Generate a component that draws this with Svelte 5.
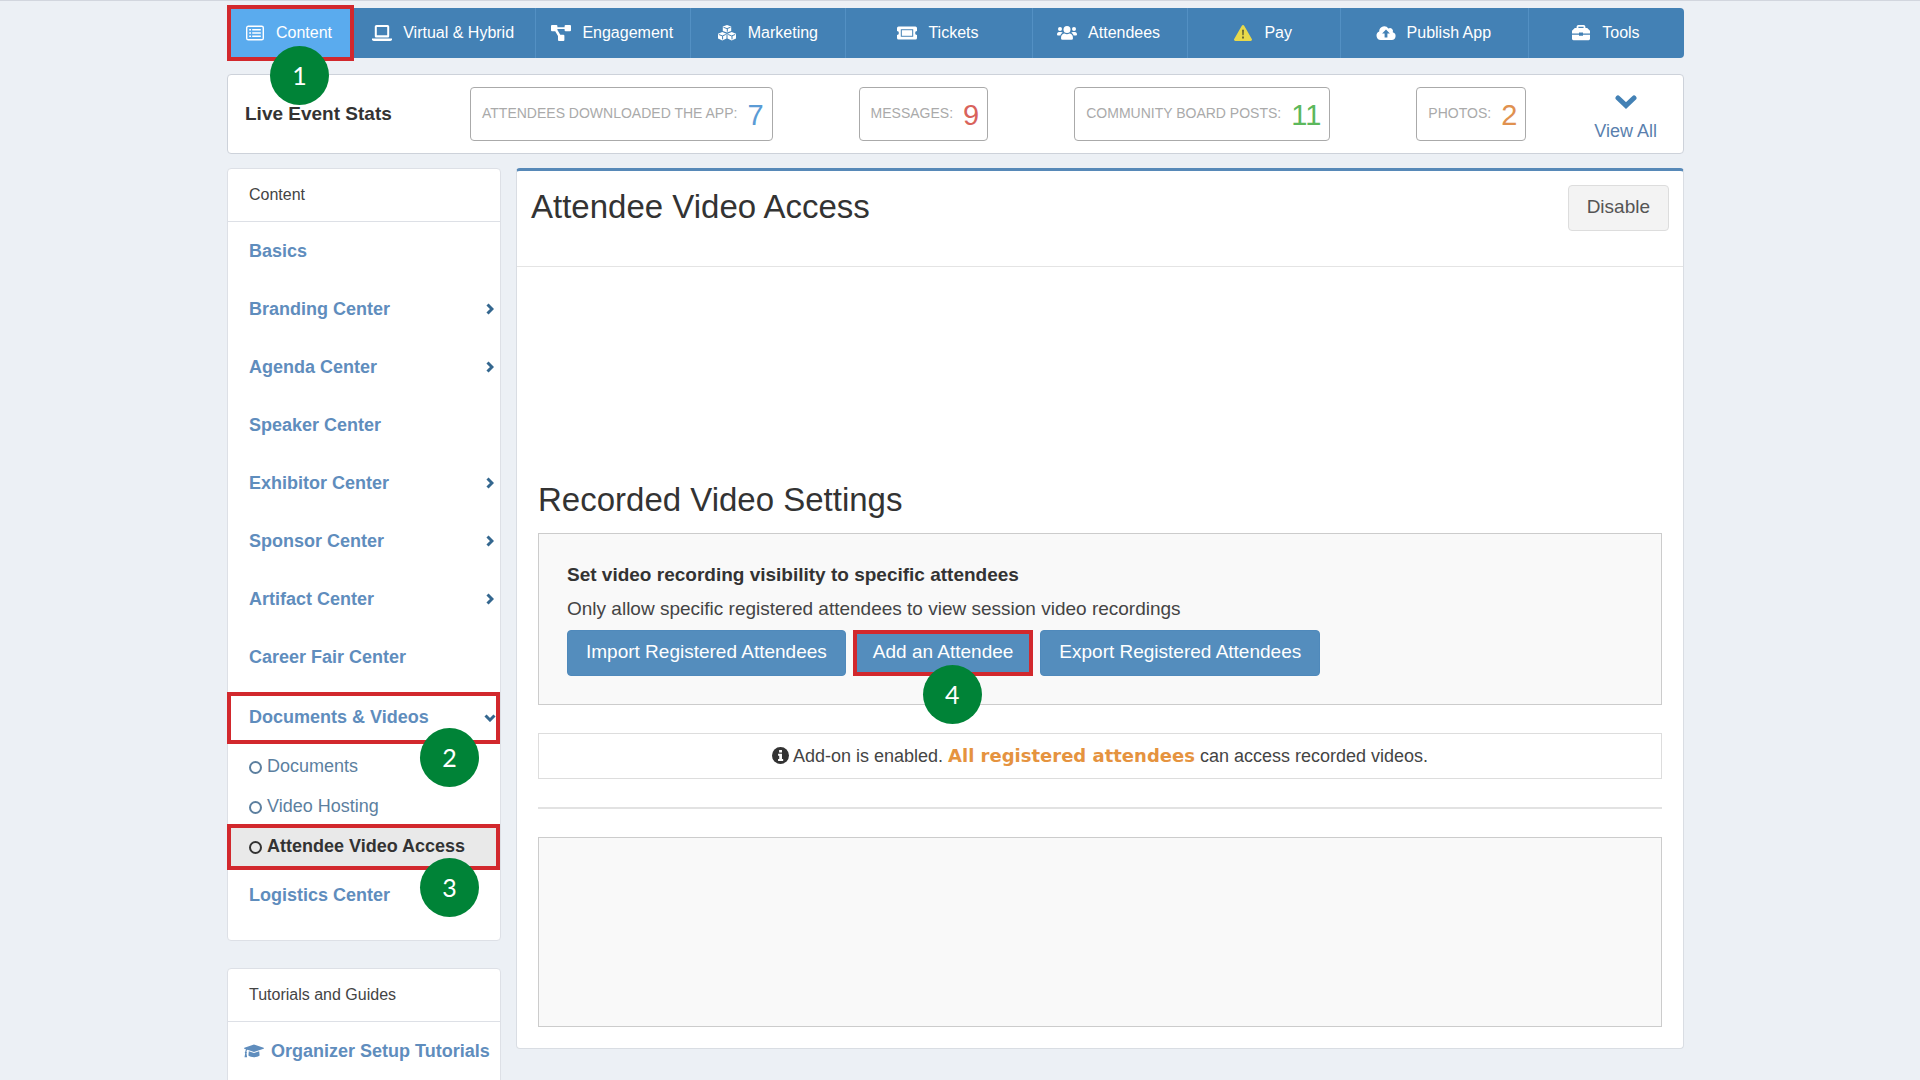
<script lang="ts">
  type NavItem = { label: string; icon: string; width: number; active?: boolean; step?: number };
  type MenuItem = { label: string; arrow?: "right" | "down"; step?: number; children?: SubItem[] };
  type SubItem = { label: string; selected?: boolean; step?: number };

  const nav: NavItem[] = [
    { label: "Content", icon: "list", width: 126, active: true, step: 1 },
    { label: "Virtual & Hybrid", icon: "laptop", width: 183 },
    { label: "Engagement", icon: "diagram", width: 155 },
    { label: "Marketing", icon: "cubes", width: 155 },
    { label: "Tickets", icon: "ticket", width: 186 },
    { label: "Attendees", icon: "users", width: 155 },
    { label: "Pay", icon: "warning", width: 153 },
    { label: "Publish App", icon: "cloud", width: 188 },
    { label: "Tools", icon: "toolbox", width: 155 },
  ];

  const stats = [
    { label: "Attendees downloaded the app:", value: 7, tone: "blue" },
    { label: "Messages:", value: 9, tone: "red" },
    { label: "Community board posts:", value: 11, tone: "green" },
    { label: "Photos:", value: 2, tone: "orange" },
  ];

  const menu: MenuItem[] = [
    { label: "Basics" },
    { label: "Branding Center", arrow: "right" },
    { label: "Agenda Center", arrow: "right" },
    { label: "Speaker Center" },
    { label: "Exhibitor Center", arrow: "right" },
    { label: "Sponsor Center", arrow: "right" },
    { label: "Artifact Center", arrow: "right" },
    { label: "Career Fair Center" },
    {
      label: "Documents & Videos",
      arrow: "down",
      step: 2,
      children: [
        { label: "Documents" },
        { label: "Video Hosting" },
        { label: "Attendee Video Access", selected: true, step: 3 },
      ],
    },
    { label: "Logistics Center" },
  ];

  const navColumns = nav.map((item) => `${item.width}fr`).join(" ");
</script>

{#snippet icon(name: string)}
  <svg class="icon {name}" viewBox="0 0 20 16" aria-hidden="true">
    {#if name === "list"}
      <rect x="1.7" y="1.2" width="16.6" height="13.6" rx="1.6" fill="none" stroke="currentColor" stroke-width="1.4" />
      <path d="M4.2 4h1.8v1.6H4.2zM7.2 4h8.6v1.6H7.2zM4.2 7.2h1.8v1.6H4.2zM7.2 7.2h8.6v1.6H7.2zM4.2 10.4h1.8V12H4.2zM7.2 10.4h8.6V12H7.2z" />
    {:else if name === "laptop"}
      <path fill-rule="evenodd" d="M4.4 0h11.2a1.6 1.6 0 0 1 1.6 1.6v9.6a1.2 1.2 0 0 1-1.2 1.2H4a1.2 1.2 0 0 1-1.2-1.2V1.6A1.6 1.6 0 0 1 4.4 0zM4.8 2v8.2h10.4V2z" />
      <path d="M0 13.4h20v.8A1.8 1.8 0 0 1 18.2 16H1.8A1.8 1.8 0 0 1 0 14.2z" />
    {:else if name === "diagram"}
      <path d="M1 0h4.4a1 1 0 0 1 1 1v1.2h7.2V1a1 1 0 0 1 1-1H19a1 1 0 0 1 1 1v4.2a1 1 0 0 1-1 1h-4.4a1 1 0 0 1-1-1V4H6.4v.9L9.3 9.8h3.1a1 1 0 0 1 1 1V15a1 1 0 0 1-1 1H8a1 1 0 0 1-1-1v-3.9L4.2 6.2H1a1 1 0 0 1-1-1V1a1 1 0 0 1 1-1z" />
    {:else if name === "cubes"}
      <path d="M10 0l4.2 1.5v4.4L10 7.6 5.8 5.9V1.5zM5.3 7.1l4.2 1.6v4.7L5.3 15.5 1 13.4V8.7zM14.7 7.1L19 8.7v4.7l-4.3 2.1-4.2-2.1V8.7z" />
      <path class="cut" d="M6.5 2.3L10 3.6l3.5-1.3M10.3 3.7v3M1.8 9.5l3.5 1.4 3.5-1.4M5.6 11v3.4M11.2 9.5l3.5 1.4 3.5-1.4M15 11v3.4" />
    {:else if name === "ticket"}
      <path fill-rule="evenodd" d="M1.6 1.5h16.8A1.6 1.6 0 0 1 20 3.1v3a1.9 1.9 0 0 0 0 3.8v3a1.6 1.6 0 0 1-1.6 1.6H1.6A1.6 1.6 0 0 1 0 12.9v-3a1.9 1.9 0 0 0 0-3.8v-3a1.6 1.6 0 0 1 1.6-1.6zM3.8 4.2v7.6h12.4V4.2z" />
      <path d="M4.8 5.2h10.4v5.6H4.8z" />
    {:else if name === "users"}
      <circle cx="10" cy="4.4" r="3.5" />
      <circle cx="3" cy="4" r="2" />
      <circle cx="17" cy="4" r="2" />
      <path d="M4 13.2c0-3 1.6-4.6 3.6-4.6 1.6.9 3.2.9 4.8 0 2 0 3.6 1.6 3.6 4.6a1.5 1.5 0 0 1-1.5 1.5h-9A1.5 1.5 0 0 1 4 13.2zM0 9.5C0 8 .8 7 2 7h2c.8 0 1.3.2 1.7.7C4.4 8.5 3.7 9.3 3.4 10.4H1a1 1 0 0 1-1-.9zM20 9.5C20 8 19.2 7 18 7h-2c-.8 0-1.3.2-1.7.7 1.3.8 2 1.6 2.3 2.7H19a1 1 0 0 0 1-.9z" />
    {:else if name === "warning"}
      <path d="M8.8.7a1.4 1.4 0 0 1 2.4 0l7.6 13.2a1.4 1.4 0 0 1-1.2 2.1H2.4a1.4 1.4 0 0 1-1.2-2.1z" />
      <path class="mark" d="M9 4.8h2l-.3 5.4H9.3zM9 11.4h2v2H9z" />
    {:else if name === "cloud"}
      <path fill-rule="evenodd" d="M16.8 7.2A3 3 0 0 0 12.4 3.6 5 5 0 0 0 3.2 6.1v.3A4.5 4.5 0 0 0 4.6 15h11.2a4 4 0 0 0 1-7.8zM10 4.6l3.9 4h-2.5v3.8H8.6V8.6H6.1z" />
    {:else if name === "toolbox"}
      <path fill-rule="evenodd" d="M5.6 3V1.8A1.8 1.8 0 0 1 7.4 0h5.2a1.8 1.8 0 0 1 1.8 1.8V3h1.8L19 5.8v2.7h-7V7.6H8v.9H1V5.8L3.8 3zM7.4 1.8V3h5.2V1.8z" />
      <path d="M1 9.7h7v1.1h4V9.7h7v4.1a1.4 1.4 0 0 1-1.4 1.4H2.4A1.4 1.4 0 0 1 1 13.8z" />
    {:else if name === "graduation"}
      <path d="M10 1.5l9.6 3.2c.5.2.5.9 0 1.1L10 9 3.4 6.8c-.8.6-.9 1.3-.9 2 .5.4.5 1.1 0 1.5l.6 3.9H.5l.7-3.9c-.5-.4-.5-1.2.1-1.5 0-1 .2-1.800.8-2.400L.4 5.8c-.5-.2-.5-.9 0-1.1z" />
      <path d="M4.800 8.200L10 9.900l5.200-1.700.4 4.300c-2.600 2.300-8.600 2.300-11.200 0z" />
    {/if}
  </svg>
{/snippet}

{#snippet badge(step: number)}
  <span class="badge">{step}</span>
{/snippet}

<div class="page">
  <div class="container">
    <nav class="topnav" style="grid-template-columns: {navColumns}">
      {#each nav as item}
        <a href="#top" class="tab" class:active={item.active}>
          {@render icon(item.icon)}
          <span>{item.label}</span>
          {#if item.step}{@render badge(item.step)}{/if}
        </a>
      {/each}
    </nav>

    <section class="stats">
      <h2>Live Event Stats</h2>
      <div class="stat-list">
        {#each stats as stat}
          <div class="stat">
            <span class="stat-label">{stat.label}</span>
            <span class="stat-value {stat.tone}">{stat.value}</span>
          </div>
        {/each}
      </div>
      <a class="view-all" href="#stats">
        <svg viewBox="0 0 22 14" aria-hidden="true"><path d="M3 3l8 7.500L19 3" /></svg>
        <span>View All</span>
      </a>
    </section>

    <div class="columns">
      <aside>
        <section class="side-panel">
          <h3>Content</h3>
          <ul class="menu">
            {#each menu as item}
              <li>
                <a class="menu-link" class:marked={item.step} class:open={item.children} href="#menu">
                  <span>{item.label}</span>
                  {#if item.arrow}
                    <svg class="arrow {item.arrow}" viewBox="0 0 8 12" aria-hidden="true"><path d="M1.5 1.5L6 6l-4.5 4.5" /></svg>
                  {/if}
                  {#if item.step}{@render badge(item.step)}{/if}
                </a>
                {#if item.children}
                  <ul class="submenu">
                    {#each item.children as child}
                      <li>
                        <a class="sub-link" class:selected={child.selected} class:marked={child.step} href="#submenu">
                          <i class="dot"></i>
                          <span>{child.label}</span>
                          {#if child.step}{@render badge(child.step)}{/if}
                        </a>
                      </li>
                    {/each}
                  </ul>
                {/if}
              </li>
            {/each}
          </ul>
        </section>

        <section class="side-panel">
          <h3>Tutorials and Guides</h3>
          <a class="guide" href="#guides">
            {@render icon("graduation")}
            <span>Organizer Setup Tutorials</span>
          </a>
        </section>
      </aside>

      <main>
        <header>
          <h1>Attendee Video Access</h1>
          <button class="btn default">Disable</button>
        </header>

        <div class="content">
          <h1>Recorded Video Settings</h1>
          <section class="well visibility">
            <strong>Set video recording visibility to specific attendees</strong>
            <p>Only allow specific registered attendees to view session video recordings</p>
            <div class="actions">
              <button class="btn primary">Import Registered Attendees</button>
              <button class="btn primary marked">Add an Attendee{@render badge(4)}</button>
              <button class="btn primary">Export Registered Attendees</button>
            </div>
          </section>

          <p class="notice">
            <svg viewBox="0 0 16 16" aria-hidden="true">
              <circle cx="8" cy="8" r="8" />
              <path d="M6.7 2.8h2.7v2.4H6.7zM5.7 6.3h3.7v4.9h1.1v1.9H5.7v-1.9h1.1V8.2H5.7z" />
            </svg>
            Add-on is enabled. <b>All registered attendees</b> can access recorded videos.
          </p>

          <hr />

          <section class="well empty"></section>
        </div>
      </main>
    </div>
  </div>
</div>

<style>
  :global(body) {
    background: #ecf0f5;
  }

  * {
    box-sizing: border-box;
  }

  h1,
  h2,
  h3,
  p,
  ul {
    margin: 0;
    padding: 0;
  }

  ul {
    list-style: none;
  }

  a {
    color: #5f8dbd;
    text-decoration: none;
  }

  .page {
    padding: 7px 9px 0 0;
    border-top: 1px solid #d2d6de;
    color: #333;
    font-family: "Liberation Sans", Arial, sans-serif;
    font-size: 18px;
  }

  .container {
    max-width: 1457px;
    margin: 0 auto;
  }

  .icon {
    width: 20px;
    height: 16px;
    flex: none;
    fill: currentColor;
  }

  .icon.warning {
    color: #e8d94a;
  }

  .mark {
    fill: #6b6a35;
  }

  .cut {
    fill: none;
    stroke: #4381b5;
    stroke-width: 1;
  }

  /* Numbered step markers */
  .badge {
    position: absolute;
    z-index: 2;
    display: flex;
    justify-content: center;
    align-items: center;
    width: 59px;
    height: 59px;
    padding-bottom: 2px;
    border-radius: 50%;
    background: #008337;
    color: #fff;
    font-family: Lato, sans-serif;
    font-size: 25px;
    font-weight: 400;
  }

  .topnav {
    display: grid;
    height: 50px;
    border-radius: 4px;
    background: #4381b5;
  }

  .tab {
    position: relative;
    display: flex;
    justify-content: center;
    align-items: center;
    gap: 11px;
    padding: 0 2px 1px 0;
    border-right: 1px solid #5390c3;
    color: #fff;
    font-size: 16px;
    white-space: nowrap;
  }

  .tab:last-child {
    border-right: 0;
  }

  .tab.active {
    background: #5aabee;
  }

  .tab.active::after,
  .marked::after {
    content: "";
    position: absolute;
    border: 4px solid #d2282d;
  }

  .tab.active::after {
    inset: -3px -2px -3px 0;
  }

  .tab .badge {
    top: 38px;
    left: 43px;
  }

  .stats {
    display: flex;
    align-items: center;
    height: 80px;
    margin-top: 16px;
    padding: 0 26px 0 17px;
    border: 1px solid #cdd2da;
    border-radius: 4px;
    background: #fff;
  }

  .stats h2 {
    width: 225px;
    font-size: 19px;
  }

  .stat-list {
    display: flex;
    flex: 1;
    justify-content: space-between;
  }

  .stat {
    display: flex;
    align-items: center;
    gap: 10px;
    height: 54px;
    padding: 0 8px 2px 11px;
    border: 1px solid #aaa;
    border-radius: 4px;
  }

  .stat-label {
    color: #aaa;
    font-size: 14px;
    text-transform: uppercase;
  }

  .stat-value {
    padding-top: 3px;
    font-size: 29px;
    line-height: 32px;
  }

  .stat-value.blue {
    color: #5b9bd5;
  }

  .stat-value.red {
    color: #d9635b;
  }

  .stat-value.green {
    color: #5cb85c;
  }

  .stat-value.orange {
    color: #e0914f;
  }

  .view-all {
    display: flex;
    flex-direction: column;
    align-items: center;
    gap: 12px;
    margin-left: 68px;
    padding-top: 8px;
    color: #5a7fae;
  }

  .view-all svg {
    width: 22px;
    height: 14px;
    fill: none;
    stroke: #4381b5;
    stroke-width: 5;
    stroke-linecap: round;
  }

  .columns {
    display: flex;
    align-items: flex-start;
    gap: 15px;
    margin-top: 14px;
  }

  aside {
    display: flex;
    flex-direction: column;
    gap: 27px;
    width: 274px;
  }

  .side-panel {
    padding-bottom: 16px;
    border: 1px solid #dde0e6;
    border-radius: 4px;
    background: #fff;
  }

  .side-panel h3 {
    padding: 0 21px;
    border-bottom: 1px solid #dde0e6;
    color: #444;
    font-size: 16px;
    font-weight: 400;
    line-height: 52px;
  }

  .menu-link,
  .sub-link,
  .guide {
    position: relative;
    display: flex;
    align-items: center;
    padding: 0 6px 0 21px;
  }

  .menu-link {
    justify-content: space-between;
    height: 58px;
    font-weight: 700;
  }

  .menu-link.open {
    height: 60px;
    padding-top: 3px;
  }

  .menu-link.marked::after {
    inset: 6px 0 2px -1px;
  }

  .menu-link .badge {
    top: 42px;
    right: 21px;
  }

  .arrow {
    width: 8px;
    height: 12px;
    fill: none;
    stroke: #34678f;
    stroke-width: 3;
  }

  .arrow.down {
    transform: rotate(90deg);
  }

  .sub-link {
    gap: 5px;
    height: 40px;
    color: #5c7f9f;
  }

  .sub-link.selected {
    background: #e9e9e9;
    color: #333;
    font-weight: 700;
  }

  .sub-link.marked::after {
    inset: -2px 0 -4px -1px;
  }

  .sub-link .badge {
    top: 32px;
    right: 21px;
  }

  .dot {
    width: 13px;
    height: 13px;
    margin-top: 2px;
    border: 2px solid currentColor;
    border-radius: 50%;
  }

  .guide {
    gap: 7px;
    height: 58px;
    padding-left: 16px;
    font-weight: 700;
    white-space: nowrap;
  }

  main {
    flex: 1;
    border: 1px solid #d9dde3;
    border-top: 3px solid #5789b8;
    border-radius: 4px;
    background: #fff;
  }

  main h1 {
    font-size: 33px;
    font-weight: 400;
    line-height: 44px;
  }

  header {
    display: flex;
    justify-content: space-between;
    align-items: flex-start;
    height: 96px;
    padding: 14px 14px 0;
    border-bottom: 1px solid #e4e4e4;
  }

  .btn {
    position: relative;
    height: 46px;
    padding: 0 18px 2px;
    border: 1px solid #ddd;
    border-radius: 4px;
    font-family: inherit;
    font-size: 19px;
    line-height: 28px;
  }

  .btn.default {
    background: #f3f3f3;
    color: #555;
  }

  .btn.primary {
    border-color: #4f89bb;
    background: #548dbd;
    color: #fff;
  }

  .btn.marked::after {
    inset: -1px -2px;
  }

  .btn .badge {
    top: 34px;
    left: 68px;
  }

  .content {
    padding: 211px 21px 21px;
  }

  .well {
    border: 1px solid #ccc;
    background: #f9f9f9;
  }

  .visibility {
    margin-top: 11px;
    padding: 24px 28px 28px;
    font-size: 19px;
    line-height: 34px;
  }

  .visibility strong {
    display: block;
  }

  .visibility p {
    color: #444;
  }

  .actions {
    display: flex;
    gap: 8px;
    margin-top: 4px;
  }

  .notice {
    margin-top: 28px;
    border: 1px solid #ddd;
    color: #444;
    line-height: 44px;
    text-align: center;
  }

  .notice svg {
    width: 17px;
    height: 17px;
    vertical-align: -2px;
    fill: #333;
  }

  .notice path {
    fill: #fff;
  }

  .notice b {
    color: #e5933f;
    font-family: "DejaVu Sans", sans-serif;
    line-height: 20px;
  }

  hr {
    height: 2px;
    margin: 28px 0;
    border: 0;
    background: #e2e2e2;
  }

  .empty {
    height: 190px;
  }
</style>
